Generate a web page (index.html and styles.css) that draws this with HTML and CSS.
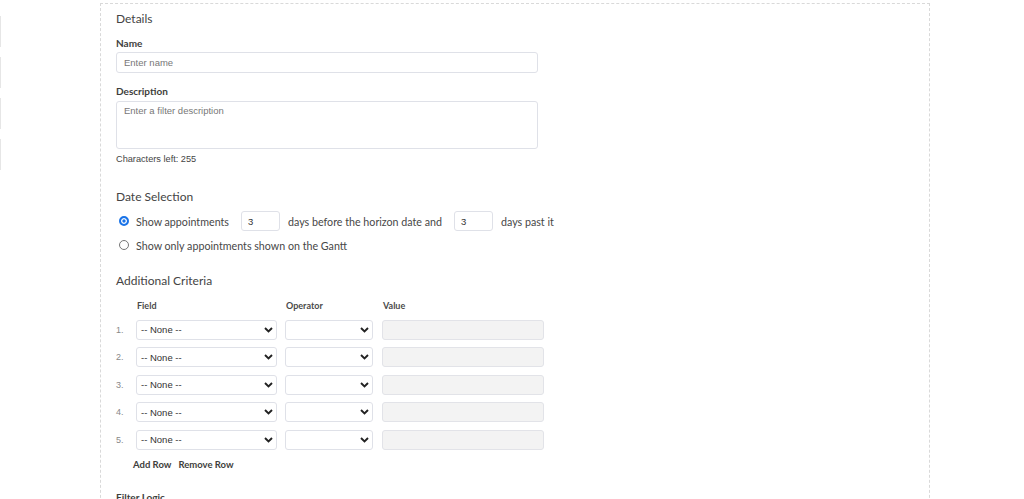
FILE: index.html
```html
<!DOCTYPE html>
<html>
<head>
<meta charset="utf-8">
<link rel="stylesheet" href="styles.css">
</head>
<body>
<div class="page">
  <div class="rail">
    <span class="rail-item"></span>
    <span class="rail-item"></span>
    <span class="rail-item"></span>
    <span class="rail-item"></span>
  </div>
  <div class="panel">
    <h2 class="section-title first">Details</h2>
    <div class="label name-label">Name</div>
    <div class="input name-input"><span class="placeholder">Enter name</span></div>
    <div class="label desc-label">Description</div>
    <div class="input textarea"><span class="placeholder">Enter a filter description</span></div>
    <div class="hint">Characters left: 255</div>

    <h2 class="section-title date-title">Date Selection</h2>
    <div class="radio-row first-radio">
      <span class="radio checked"></span>
      <span class="radio-text">Show appointments</span>
      <span class="input small-input"><span class="value-text">3</span></span>
      <span class="radio-text">days before the horizon date and</span>
      <span class="input small-input"><span class="value-text">3</span></span>
      <span class="radio-text">days past it</span>
    </div>
    <div class="radio-row second-radio">
      <span class="radio"></span>
      <span class="radio-text">Show only appointments shown on the Gantt</span>
    </div>

    <h2 class="section-title criteria-title">Additional Criteria</h2>
    <div class="criteria">
      <span class="col-head"></span>
      <span class="col-head">Field</span>
      <span class="col-head">Operator</span>
      <span class="col-head">Value</span>

      <span class="row-num">1.</span>
      <div class="select field-select"><span>-- None --</span><svg class="chev" viewBox="0 0 9 6" width="9" height="6"><path d="M1 1 L4.5 4.5 L8 1" fill="none" stroke="#222" stroke-width="1.9"/></svg></div>
      <div class="select op-select"><span></span><svg class="chev" viewBox="0 0 9 6" width="9" height="6"><path d="M1 1 L4.5 4.5 L8 1" fill="none" stroke="#222" stroke-width="1.9"/></svg></div>
      <div class="value-box"></div>

      <span class="row-num">2.</span>
      <div class="select field-select"><span>-- None --</span><svg class="chev" viewBox="0 0 9 6" width="9" height="6"><path d="M1 1 L4.5 4.5 L8 1" fill="none" stroke="#222" stroke-width="1.9"/></svg></div>
      <div class="select op-select"><span></span><svg class="chev" viewBox="0 0 9 6" width="9" height="6"><path d="M1 1 L4.5 4.5 L8 1" fill="none" stroke="#222" stroke-width="1.9"/></svg></div>
      <div class="value-box"></div>

      <span class="row-num">3.</span>
      <div class="select field-select"><span>-- None --</span><svg class="chev" viewBox="0 0 9 6" width="9" height="6"><path d="M1 1 L4.5 4.5 L8 1" fill="none" stroke="#222" stroke-width="1.9"/></svg></div>
      <div class="select op-select"><span></span><svg class="chev" viewBox="0 0 9 6" width="9" height="6"><path d="M1 1 L4.5 4.5 L8 1" fill="none" stroke="#222" stroke-width="1.9"/></svg></div>
      <div class="value-box"></div>

      <span class="row-num">4.</span>
      <div class="select field-select"><span>-- None --</span><svg class="chev" viewBox="0 0 9 6" width="9" height="6"><path d="M1 1 L4.5 4.5 L8 1" fill="none" stroke="#222" stroke-width="1.9"/></svg></div>
      <div class="select op-select"><span></span><svg class="chev" viewBox="0 0 9 6" width="9" height="6"><path d="M1 1 L4.5 4.5 L8 1" fill="none" stroke="#222" stroke-width="1.9"/></svg></div>
      <div class="value-box"></div>

      <span class="row-num">5.</span>
      <div class="select field-select"><span>-- None --</span><svg class="chev" viewBox="0 0 9 6" width="9" height="6"><path d="M1 1 L4.5 4.5 L8 1" fill="none" stroke="#222" stroke-width="1.9"/></svg></div>
      <div class="select op-select"><span></span><svg class="chev" viewBox="0 0 9 6" width="9" height="6"><path d="M1 1 L4.5 4.5 L8 1" fill="none" stroke="#222" stroke-width="1.9"/></svg></div>
      <div class="value-box"></div>
    </div>
    <div class="row-actions">
      <span class="action">Add Row</span>
      <span class="action">Remove Row</span>
    </div>
    <div class="label logic-label">Filter Logic</div>
  </div>
</div>
</body>
</html>
```

FILE: styles.css
```css
* { box-sizing: border-box; }
html, body {
  margin: 0;
  padding: 0;
  background: #ffffff;
  overflow: hidden;
  height: 499px;
}
body {
  font-family: "Lato", "Liberation Sans", sans-serif;
  color: #444444;
}
.page {
  display: flex;
  align-items: flex-start;
}
.rail {
  width: 1px;
  display: flex;
  flex-direction: column;
  gap: 10px;
  padding-top: 16px;
}
.rail-item {
  display: block;
  width: 1px;
  height: 31px;
  background: #e6e6e6;
}
.panel {
  margin-left: 99px;
  margin-top: 3px;
  width: 830px;
  height: 520px;
  border: 1px dashed #d9d9d9;
  border-bottom: none;
  padding: 0 15px;
}
.section-title {
  margin: 0;
  font-weight: 400;
  font-size: 12px;
  line-height: 16px;
  color: #444444;
}
.section-title.first { margin-top: 7px; }
.label {
  font-size: 10px;
  font-weight: 700;
  line-height: 14px;
  color: #3e3e3c;
}
.name-label { margin-top: 9px; }
.name-input { margin-top: 2px; }
.desc-label { margin-top: 11px; }
.textarea { margin-top: 3px; }
.input {
  display: flex;
  align-items: center;
  border: 1px solid #dfe1e8;
  border-radius: 3px;
  background: #fff;
}
.name-input {
  width: 422px;
  height: 21px;
  padding-left: 7px;
}
.textarea {
  width: 422px;
  height: 48px;
  align-items: flex-start;
  padding: 3px 7px;
}
.placeholder {
  font-family: "Liberation Sans", Arial, sans-serif;
  font-size: 9.5px;
  color: #777777;
  line-height: 12px;
}
.hint {
  font-family: "Liberation Sans", Arial, sans-serif;
  font-size: 9.2px;
  line-height: 12px;
  color: #444;
  margin-top: 4px;
}
.date-title { margin-top: 24px; }
.radio-row {
  display: flex;
  align-items: center;
  font-size: 10.7px;
  color: #474747;
}
.first-radio { margin-top: 6px; height: 20px; }
.second-radio { margin-top: 4px; height: 20px; }
.radio {
  width: 10px;
  height: 10px;
  border-radius: 50%;
  border: 1px solid #767676;
  margin-left: 3px;
  margin-right: 7px;
  flex: none;
  background: #fff;
}
.radio.checked {
  border: 2px solid #1a73e8;
  box-shadow: inset 0 0 0 1.3px #fff;
  background: #1a73e8;
}
.radio-text { white-space: nowrap; }
.small-input {
  width: 39px;
  height: 20px;
  padding-left: 6px;
  margin: 0 8px 0 12px;
}
.value-text {
  font-family: "Liberation Sans", Arial, sans-serif;
  font-size: 9.5px;
  color: #333;
}
.criteria-title { margin-top: 18px; }
.criteria {
  display: grid;
  grid-template-columns: 20px 149px 97px 162px;
  grid-template-rows: 12px repeat(5, 20px);
  row-gap: 7.5px;
  margin-top: 11px;
}
.col-head {
  font-size: 9px;
  font-weight: 700;
  color: #4a4a4a;
  line-height: 12px;
  padding-left: 1px;
}
.row-num {
  font-family: "Liberation Sans", Arial, sans-serif;
  font-size: 9px;
  color: #888;
  align-self: center;
}
.select {
  display: flex;
  align-items: center;
  justify-content: space-between;
  height: 20px;
  border: 1px solid #dfe1e8;
  border-radius: 3px;
  background: #fff;
  padding: 0 3px 0 4px;
  font-family: "Liberation Sans", Arial, sans-serif;
  font-size: 9.5px;
  color: #333;
}
.field-select { width: 141px; }
.op-select { width: 88px; }
.value-box {
  width: 162px;
  height: 20px;
  border: 1px solid #e2e3e8;
  border-radius: 3px;
  background: #f3f3f3;
}
.row-actions {
  display: flex;
  gap: 7px;
  padding-left: 17px;
  margin-top: 9px;
  font-size: 9.5px;
  font-weight: 700;
  color: #3e3e3c;
  line-height: 12px;
}
.logic-label { margin-top: 19px; }
```
